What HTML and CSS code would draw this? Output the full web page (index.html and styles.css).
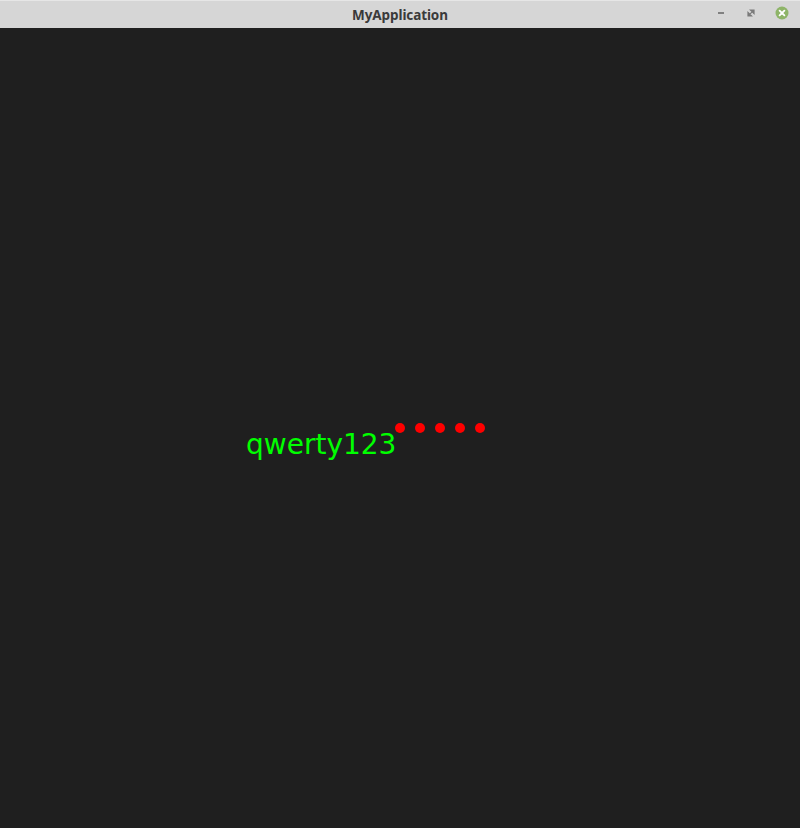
FILE: index.html
```html
<!DOCTYPE html>
<html>
<head>
<meta charset="utf-8">
<link rel="stylesheet" href="styles.css">
</head>
<body>
<div class="window">
  <header class="titlebar">
    <div class="title">MyApplication</div>
    <div class="controls">
      <span class="btn min"><svg width="8" height="8" viewBox="0 0 8 8"><rect x="1" y="3" width="6" height="2" fill="#808080"/></svg></span>
      <span class="btn max"><svg width="8" height="8" viewBox="0 0 8 8"><path d="M3.5 1H7V4.5Z M1 3.5V7H4.5Z M2.8 5.2L5.2 2.8" stroke="#7a7a7a" stroke-width="1.2" fill="#7a7a7a"/></svg></span>
      <span class="btn close"><svg width="14" height="14" viewBox="0 0 14 14"><circle cx="7" cy="7" r="6.5" fill="#8eb468"/><path d="M4.6 4.6L9.4 9.4M9.4 4.6L4.6 9.4" stroke="#fff" stroke-width="1.8" stroke-linecap="round"/></svg></span>
    </div>
  </header>
  <main class="canvas">
    <div class="label">qwerty123</div>
    <div class="dots">
      <span class="dot"></span><span class="dot"></span><span class="dot"></span><span class="dot"></span><span class="dot"></span>
    </div>
  </main>
</div>
</body>
</html>
```
FILE: styles.css
```css
html, body {
  margin: 0;
  padding: 0;
  width: 800px;
  height: 828px;
  overflow: hidden;
  background: #1f1f1f;
}
.window {
  display: flex;
  flex-direction: column;
  width: 800px;
  height: 828px;
}
.titlebar {
  position: relative;
  height: 28px;
  flex: none;
  background: #d6d6d6;
  border-top: 1px solid #e6e6e6;
  box-sizing: border-box;
  display: flex;
  align-items: center;
  justify-content: center;
}
.title {
  font-family: "Noto Sans", "DejaVu Sans", sans-serif;
  font-weight: bold;
  font-size: 13.5px;
  color: #3a3a3a;
  letter-spacing: -0.1px;
}
.controls {
  position: absolute;
  right: 11px;
  top: 5px;
  display: flex;
  align-items: center;
}
.btn {
  display: flex;
  align-items: center;
  justify-content: center;
}
.btn.min { width: 8px; height: 14px; margin-right: 22px; }
.btn.max { width: 8px; height: 14px; margin-right: 20px; }
.btn.close { width: 14px; height: 14px; }
.canvas {
  position: relative;
  flex: 1;
  background: #1f1f1f;
}
.label {
  position: absolute;
  left: 246px;
  top: 401px;
  font-family: "DejaVu Sans", sans-serif;
  font-size: 28px;
  line-height: 32px;
  color: #00ff00;
}
.dots {
  position: absolute;
  left: 395px;
  top: 395px;
  display: flex;
  gap: 10px;
}
.dot {
  width: 10px;
  height: 10px;
  border-radius: 50%;
  background: #ff0000;
}
```
